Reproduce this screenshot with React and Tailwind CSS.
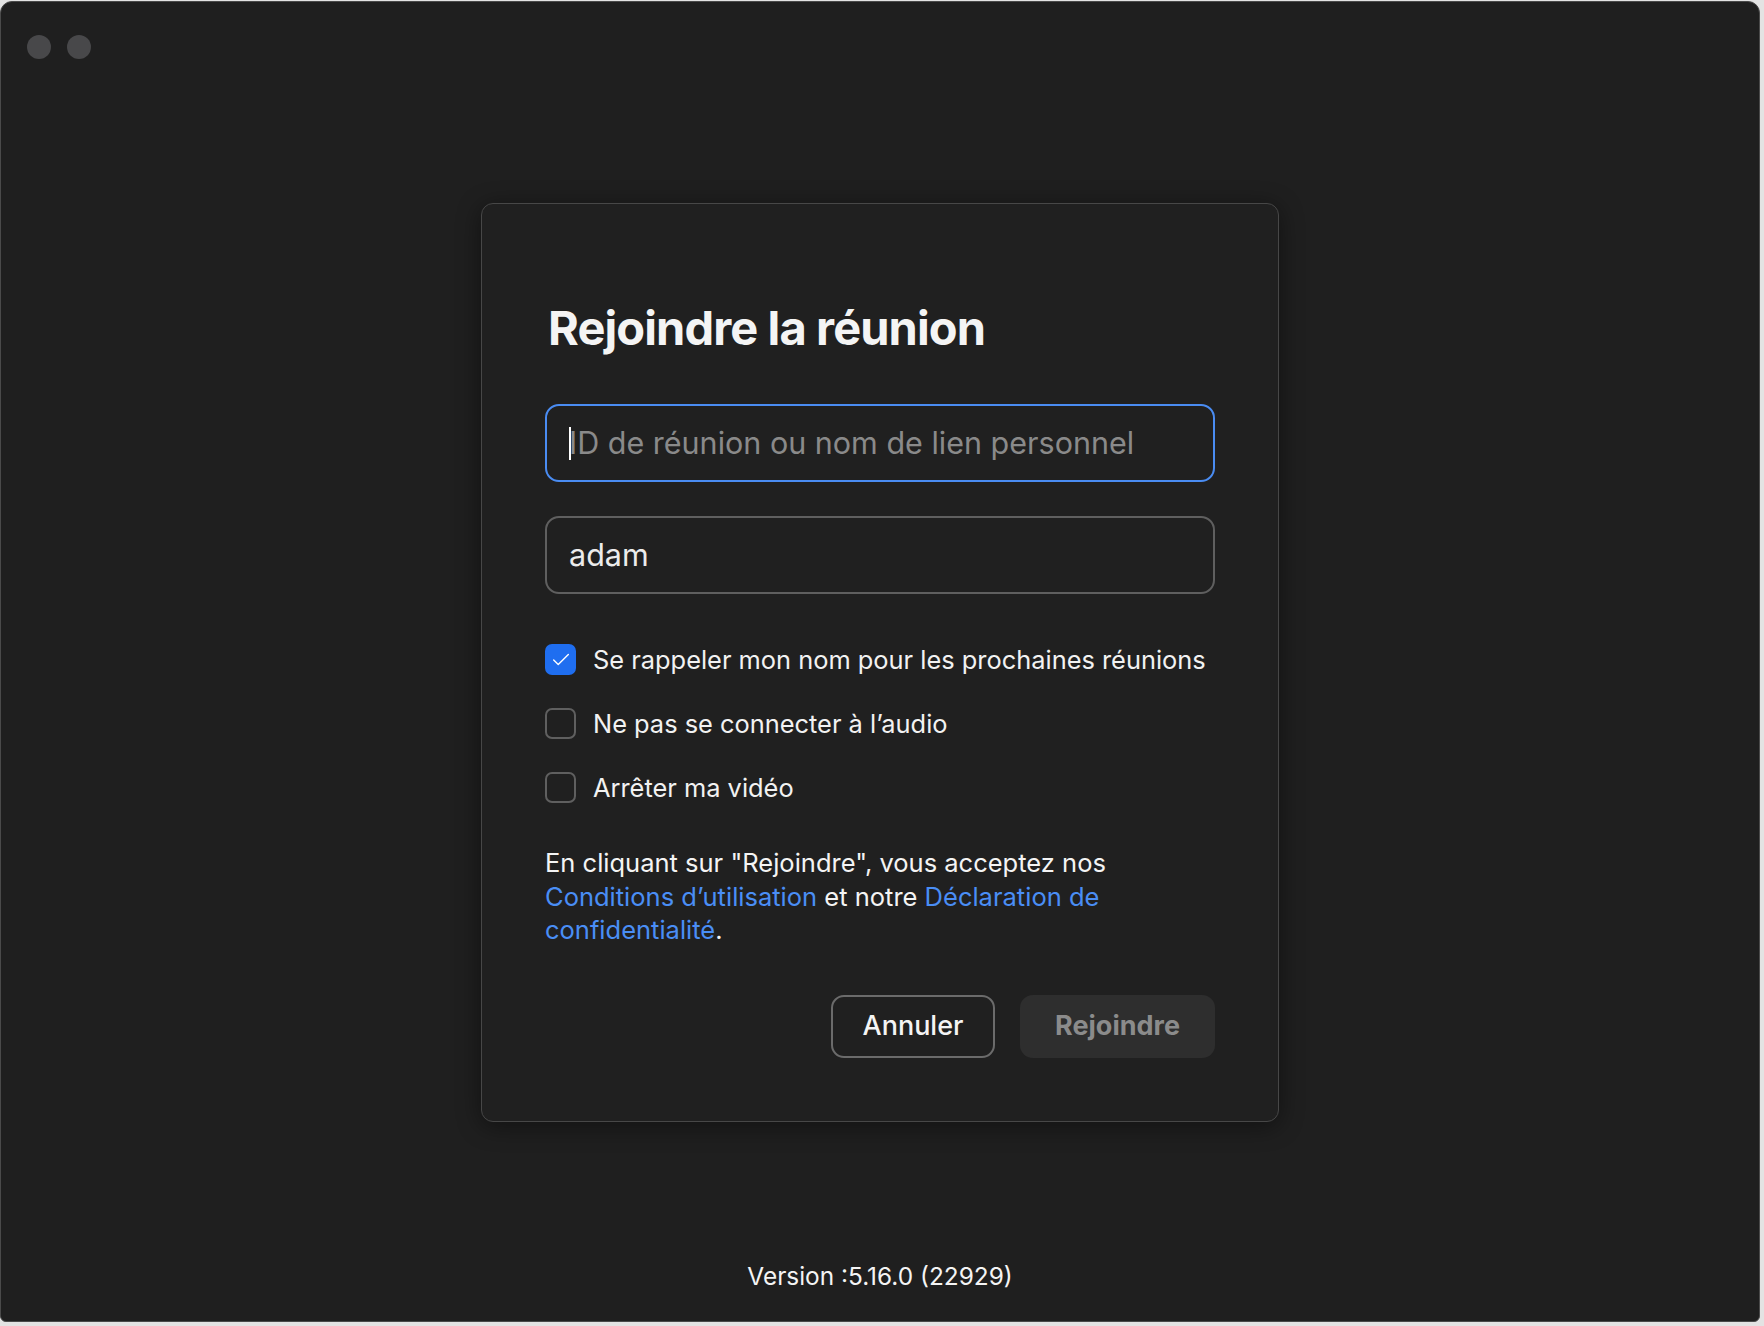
import { Check } from 'lucide-react'

const OPTIONS = [
  { label: 'Se rappeler mon nom pour les prochaines réunions', checked: true },
  { label: 'Ne pas se connecter à l’audio', checked: false },
  { label: 'Arrêter ma vidéo', checked: false },
]

function Checkbox({ checked }) {
  if (checked) {
    return (
      <span className="flex h-[31px] w-[31px] shrink-0 items-center justify-center rounded-[7px] bg-[#1f6ef0]">
        <Check className="h-[22px] w-[22px] text-white" strokeWidth={1.5} />
      </span>
    )
  }
  return <span className="h-[31px] w-[31px] shrink-0 rounded-[7px] border-2 border-[#5f5f5f]" />
}

export default function App() {
  return (
    <div className="min-h-screen w-full bg-[#e3e3e3] pt-[1px] font-['Inter','Liberation_Sans',sans-serif]">
      <div className="relative flex h-[1321px] w-[1760px] flex-col items-center overflow-hidden rounded-t-[12px] rounded-b-[6px] border border-[#4a4a4a] bg-[#1f1f1f]">
        {/* traffic lights */}
        <div className="absolute left-[26px] top-[33px] flex gap-[16px]">
          <span className="h-[24px] w-[24px] rounded-full bg-[#48484a]" />
          <span className="h-[24px] w-[24px] rounded-full bg-[#48484a]" />
        </div>

        <div className="mt-[201px] flex w-[798px] flex-col rounded-[12px] border border-[#474747] bg-[#202020] px-[63px] pb-[63px] pt-[100px] shadow-[0_4px_24px_rgba(0,0,0,0.45)]">
          <h1 className="ml-[3px] text-[47px] font-bold leading-none tracking-[-0.9px] text-[#f4f4f4]">
            Rejoindre la réunion
          </h1>

          <div className="mt-[53px] flex h-[78px] items-center rounded-[14px] border-2 border-[#4a8cf2] px-[22px]">
            <span className="mr-[-2px] h-[33px] w-[2px] bg-white" />
            <span className="text-[30.5px] text-[#8a8a8a]">ID de réunion ou nom de lien personnel</span>
          </div>

          <div className="mt-[34px] flex h-[78px] items-center rounded-[14px] border-2 border-[#5f5f5f] px-[22px]">
            <span className="text-[30.5px] text-[#ececec]">adam</span>
          </div>

          <div className="mt-[50px] flex flex-col gap-[33px]">
            {OPTIONS.map(({ label, checked }) => (
              <div key={label} className="flex items-center gap-[17px]">
                <Checkbox checked={checked} />
                <span className="text-[25.4px] leading-none text-[#f2f2f2]">{label}</span>
              </div>
            ))}
          </div>

          <p className="mt-[43px] text-[25.5px] leading-[33.5px] text-[#f4f4f4]">
            En cliquant sur "Rejoindre", vous acceptez nos{' '}
            <a className="text-[#4a8ef5]">Conditions d’utilisation</a> et notre{' '}
            <a className="text-[#4a8ef5]">Déclaration de confidentialité</a>.
          </p>

          <div className="mt-[48px] flex justify-end gap-[25px]">
            <button
              type="button"
              className="h-[63px] w-[164px] rounded-[13px] border-2 border-[#6b6b6b] text-[27px] font-medium text-[#f4f4f4]"
            >
              Annuler
            </button>
            <button
              type="button"
              disabled
              className="h-[63px] w-[195px] rounded-[13px] bg-[#2e2e2e] text-[27px] font-bold text-[#8b8b8b]"
            >
              Rejoindre
            </button>
          </div>
        </div>

        <p className="mt-auto mb-[26px] text-[24.4px] text-[#f4f4f4]">Version :5.16.0 (22929)</p>
      </div>
    </div>
  )
}
